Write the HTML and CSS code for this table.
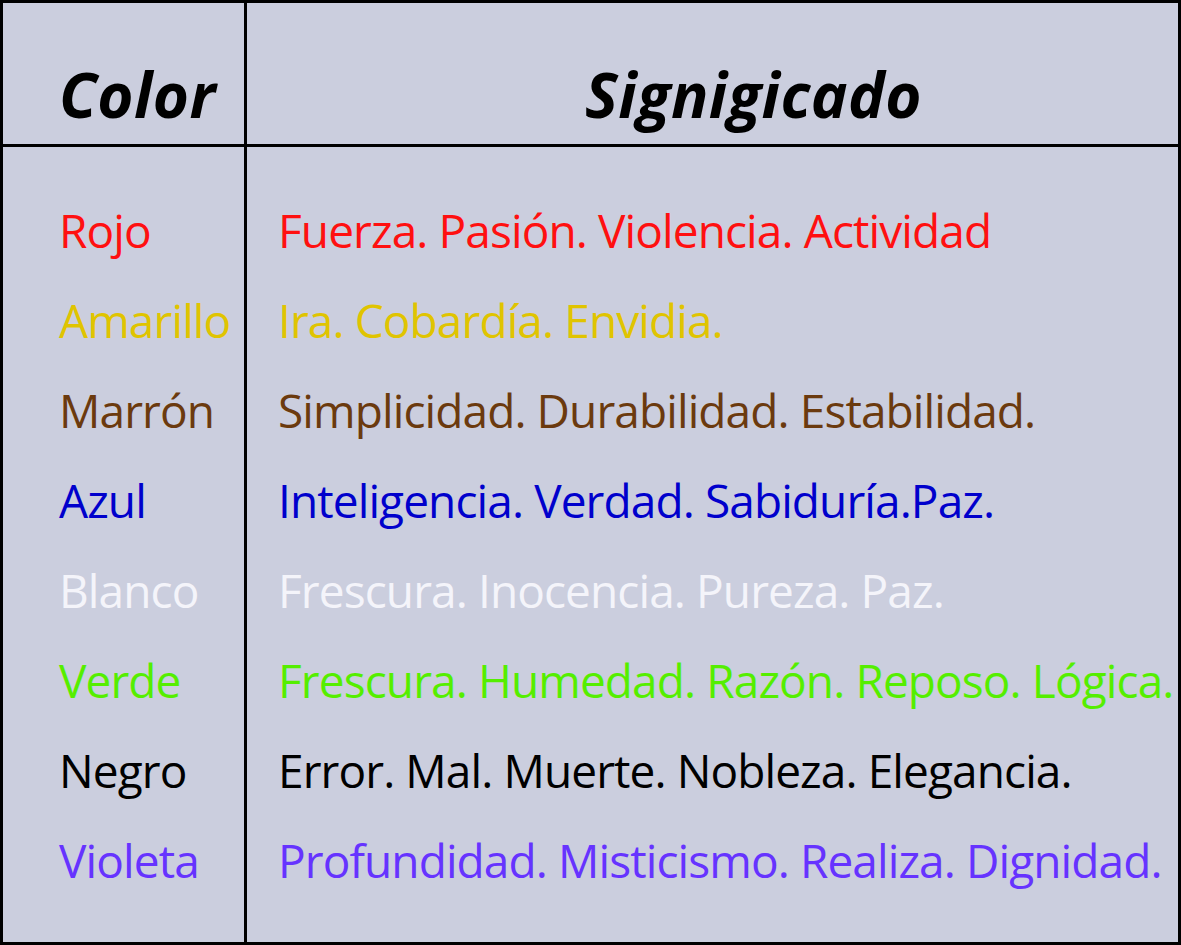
FILE: index.html
```html
<!DOCTYPE html>
<html lang="es">
<head>
<meta charset="utf-8">
<title>Color y significado</title>
<link rel="stylesheet" href="styles.css">
</head>
<body>
<div class="table">
  <div class="head head-color">Color</div>
  <div class="head head-sig">Signigicado</div>
  <div class="col col-names">
    <div class="row rojo">Rojo</div>
    <div class="row amarillo">Amarillo</div>
    <div class="row marron">Marrón</div>
    <div class="row azul">Azul</div>
    <div class="row blanco">Blanco</div>
    <div class="row verde">Verde</div>
    <div class="row negro">Negro</div>
    <div class="row violeta">Violeta</div>
  </div>
  <div class="col col-sig">
    <div class="row rojo">Fuerza. Pasión. Violencia. Actividad</div>
    <div class="row amarillo">Ira. Cobardía. Envidia.</div>
    <div class="row marron">Simplicidad. Durabilidad. Estabilidad.</div>
    <div class="row azul">Inteligencia. Verdad. Sabiduría.Paz.</div>
    <div class="row blanco">Frescura. Inocencia. Pureza. Paz.</div>
    <div class="row verde">Frescura. Humedad. Razón. Reposo. Lógica.</div>
    <div class="row negro">Error. Mal. Muerte. Nobleza. Elegancia.</div>
    <div class="row violeta">Profundidad. Misticismo. Realiza. Dignidad.</div>
  </div>
</div>
</body>
</html>
```
FILE: styles.css
```css
html, body {
  margin: 0;
  padding: 0;
  background: #cbcede;
}
.table {
  box-sizing: border-box;
  width: 1181px;
  height: 945px;
  border: 3px solid #000;
  background: #cbcede;
  display: grid;
  grid-template-columns: 244px 1fr;
  grid-template-rows: 144px 1fr;
  font-family: "Open Sans", "Liberation Sans", sans-serif;
  overflow: hidden;
}
.head {
  border-bottom: 3px solid #000;
  font-weight: 700;
  font-style: italic;
  font-size: 62px;
  letter-spacing: 0.4px;
  color: #000;
  display: flex;
  align-items: center;
  white-space: nowrap;
}
.head-color {
  border-right: 3px solid #000;
  padding-left: 56px;
  padding-top: 40px;
}
.head-sig {
  padding-left: 338px;
  padding-top: 40px;
}
.col {
  display: flex;
  flex-direction: column;
  padding-top: 38px;
  white-space: nowrap;
  font-size: 46px;
  letter-spacing: -0.9px;
}
.col-names {
  border-right: 3px solid #000;
  padding-left: 56px;
}
.col-sig {
  padding-left: 31px;
}
.row {
  height: 90px;
  line-height: 90px;
}
.rojo { color: #ff1010; }
.amarillo { color: #e0c400; }
.marron { color: #6b3a0e; }
.azul { color: #0000cc; }
.blanco { color: #f4f4fa; }
.verde { color: #55ee00; }
.negro { color: #000; }
.violeta { color: #6633ff; }
```
